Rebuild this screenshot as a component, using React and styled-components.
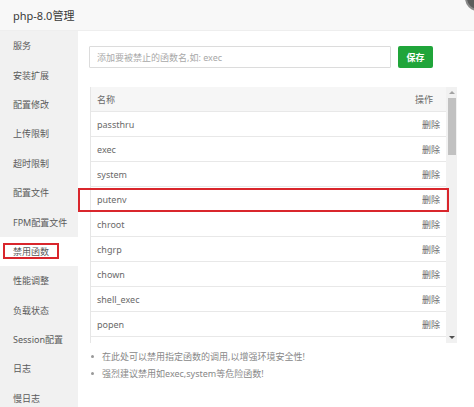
import React from "react";
import styled, { createGlobalStyle } from "styled-components";

const Global = createGlobalStyle`
  html, body { margin: 0; padding: 0; background: #fff; }
  body { font-family: "Noto Sans", "Noto Sans CJK SC", sans-serif; }
  * { box-sizing: border-box; }
`;

const Layer = styled.div`
  position: relative;
  width: 474px;
  height: 407px;
  overflow: hidden;
  background: #fff;
  display: flex;
  flex-direction: column;
`;

const TitleBar = styled.div`
  height: 31px;
  flex: none;
  background: #f8f8f8;
  border-bottom: 1px solid #eeeeee;
  display: flex;
  align-items: center;
  padding-left: 13px;
  font-size: 11px;
  color: #3a3a3a;
`;

const CloseDot = styled.div`
  position: absolute;
  right: -17px;
  top: -15px;
  width: 26px;
  height: 26px;
  border-radius: 50%;
  background: #5c5c5c;
  border: 2px solid #8a8a8a;
`;

const Main = styled.div`
  flex: 1;
  display: flex;
  min-height: 0;
`;

const Sidebar = styled.ul`
  width: 78px;
  flex: none;
  margin: 0;
  padding: 0;
  list-style: none;
  background: #f1f1f1;
`;

const NavItem = styled.li`
  position: relative;
  height: 29.4px;
  display: flex;
  align-items: center;
  padding-left: 13px;
  font-size: 9px;
  color: #5a5a5a;
  background: ${(p) => (p.$active ? "#fff" : "transparent")};
`;

const Mark = styled.span`
  position: absolute;
  left: 3px;
  top: 50%;
  margin-top: -8px;
  width: 56px;
  height: 16px;
  border: 2px solid #d9262c;
`;

const Content = styled.div`
  position: relative;
  flex: 1;
  padding: 15px 0 0 11px;
  display: flex;
  flex-direction: column;
`;

const FormRow = styled.div`
  display: flex;
  align-items: center;
  height: 22px;
`;

const Input = styled.input`
  width: 302px;
  height: 22px;
  border: 1px solid #dcdcdc;
  border-radius: 1px;
  padding: 0 0 0 7px;
  font-family: "Noto Sans", "Noto Sans CJK SC", sans-serif;
  font-size: 9px;
  color: #333;
  outline: none;
  &::placeholder { color: #a8a8a8; }
`;

const SaveButton = styled.button`
  margin-left: 7px;
  width: 35px;
  height: 22px;
  border: none;
  border-radius: 2px;
  background: #20a53a;
  color: #fff;
  font-family: "Noto Sans CJK SC", sans-serif;
  font-weight: 700;
  font-size: 9px;
  padding: 0;
`;

const TableBox = styled.div`
  margin-top: 19px;
  margin-left: 1px;
  width: 367px;
  height: 256px;
  display: flex;
  border-left: 1px solid #e6e6e6;
`;

const TableView = styled.div`
  flex: 1;
  overflow: hidden;
`;

const Row = styled.div`
  height: 25px;
  display: flex;
  align-items: center;
  justify-content: space-between;
  padding: 0 ${(p) => (p.$head ? "13px" : "6px")} 0 6px;
  background: ${(p) => (p.$head ? "#f6f6f6" : "#fff")};
  border-bottom: 1px solid #e8e8e8;
  font-size: 9px;
  color: #6a6a6a;
`;

const Name = styled.span``;
const Action = styled.span`
  color: #6a6a6a;
`;

const Scrollbar = styled.div`
  width: 11px;
  flex: none;
  background: #f1f1f1;
  display: flex;
  flex-direction: column;
  align-items: center;
`;

const Arrow = styled.div`
  height: 11px;
  width: 11px;
  flex: none;
  display: flex;
  align-items: center;
  justify-content: center;
  &::after {
    content: "";
    border-left: 3px solid transparent;
    border-right: 3px solid transparent;
    ${(p) => (p.$down ? "border-top: 3px solid #505050;" : "border-bottom: 3px solid #a3a3a3;")}
  }
`;

const Track = styled.div`
  flex: 1;
  width: 100%;
  display: flex;
  justify-content: center;
`;

const Thumb = styled.div`
  width: 8px;
  height: 57px;
  background: #c1c1c1;
`;

const Notes = styled.ul`
  margin: 5px 0 0 2px;
  padding: 0;
  list-style: none;
`;

const Note = styled.li`
  height: 17px;
  display: flex;
  align-items: center;
  font-size: 9px;
  color: #888;
  &::before {
    content: "";
    width: 3px;
    height: 3px;
    border-radius: 50%;
    background: #999;
    margin: 0 8px 0 0;
  }
`;

const RowMark = styled.div`
  position: absolute;
  left: 0;
  top: 157px;
  width: 371px;
  height: 24px;
  border: 2px solid #d9262c;
  pointer-events: none;
`;

const nav = [
  "服务", "安装扩展", "配置修改", "上传限制", "超时限制", "配置文件",
  "FPM配置文件", "禁用函数", "性能调整", "负载状态", "Session配置", "日志", "慢日志",
];

const funcs = [
  "passthru", "exec", "system", "putenv", "chroot", "chgrp", "chown",
  "shell_exec", "popen",
];

export default function App() {
  return (
    <>
      <Global />
      <Layer>
        <TitleBar>php-8.0管理</TitleBar>
        <CloseDot />
        <Main>
          <Sidebar>
            {nav.map((n) => (
              <NavItem key={n} $active={n === "禁用函数"}>
                {n === "禁用函数" && <Mark />}
                {n}
              </NavItem>
            ))}
          </Sidebar>
          <Content>
            <FormRow>
              <Input placeholder="添加要被禁止的函数名,如: exec" />
              <SaveButton>保存</SaveButton>
            </FormRow>
            <TableBox>
              <TableView>
                <Row $head>
                  <Name>名称</Name>
                  <Action>操作</Action>
                </Row>
                {funcs.map((f) => (
                  <Row key={f}>
                    <Name>{f}</Name>
                    <Action>删除</Action>
                  </Row>
                ))}
              </TableView>
              <Scrollbar>
                <Arrow />
                <Track>
                  <Thumb />
                </Track>
                <Arrow $down />
              </Scrollbar>
            </TableBox>
            <Notes>
              <Note>在此处可以禁用指定函数的调用,以增强环境安全性!</Note>
              <Note>强烈建议禁用如exec,system等危险函数!</Note>
            </Notes>
            <RowMark />
          </Content>
        </Main>
      </Layer>
    </>
  );
}
